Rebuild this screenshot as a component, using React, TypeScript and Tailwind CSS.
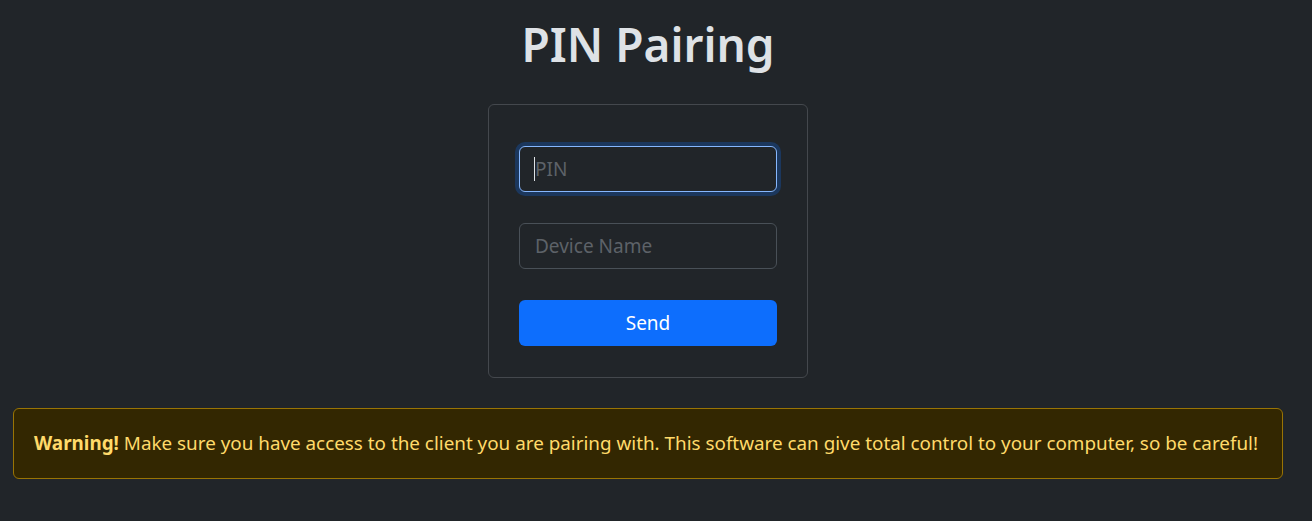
import React from 'react';

export default function App() {
  return (
    <div className="min-h-[521px] w-full bg-[#212529] text-[#dee2e6] font-['Noto_Sans',sans-serif]">
      <div className="w-[1296px] px-[13px] pt-[17px]">
        <h1 className="text-center text-[46px] font-semibold leading-[1.2] text-[#dee2e6]">
          PIN Pairing
        </h1>

        <div className="mt-[32px] flex justify-center">
          <form
            onSubmit={(e) => e.preventDefault()}
            className="flex w-[320px] flex-col gap-[31px] rounded-[6px] border border-[#44484d] px-[30px] pt-[41px] pb-[31px]"
          >
            <div className="relative">
              <input
                placeholder="PIN"
                className="block h-[46px] w-full rounded-[6px] border border-[#86b7fe] bg-[#212529] px-[15px] text-[19px] text-[#dee2e6] shadow-[0_0_0_4px_rgba(13,110,253,0.25)] outline-none placeholder:text-[#5d6268]"
              />
              <span className="pointer-events-none absolute left-[15px] top-[11px] h-[24px] w-px bg-[#dee2e6]" />
            </div>
            <input
              placeholder="Device Name"
              className="block h-[46px] w-full rounded-[6px] border border-[#495057] bg-[#212529] px-[15px] text-[19px] text-[#dee2e6] outline-none placeholder:text-[#5d6268]"
            />
            <button
              type="submit"
              className="h-[46px] w-full rounded-[6px] bg-[#0d6efd] text-[19px] text-white"
            >
              Send
            </button>
          </form>
        </div>

        <div className="mt-[30px] whitespace-nowrap rounded-[6px] border border-[#997404] bg-[#332701] px-[20px] py-[21px] text-[18.85px] leading-[27px] text-[#ffda6a]">
          <strong className="font-bold">Warning!</strong> Make sure you have access to the client you are pairing with. This software can give total control to your computer, so be careful!
        </div>
      </div>
    </div>
  );
}
